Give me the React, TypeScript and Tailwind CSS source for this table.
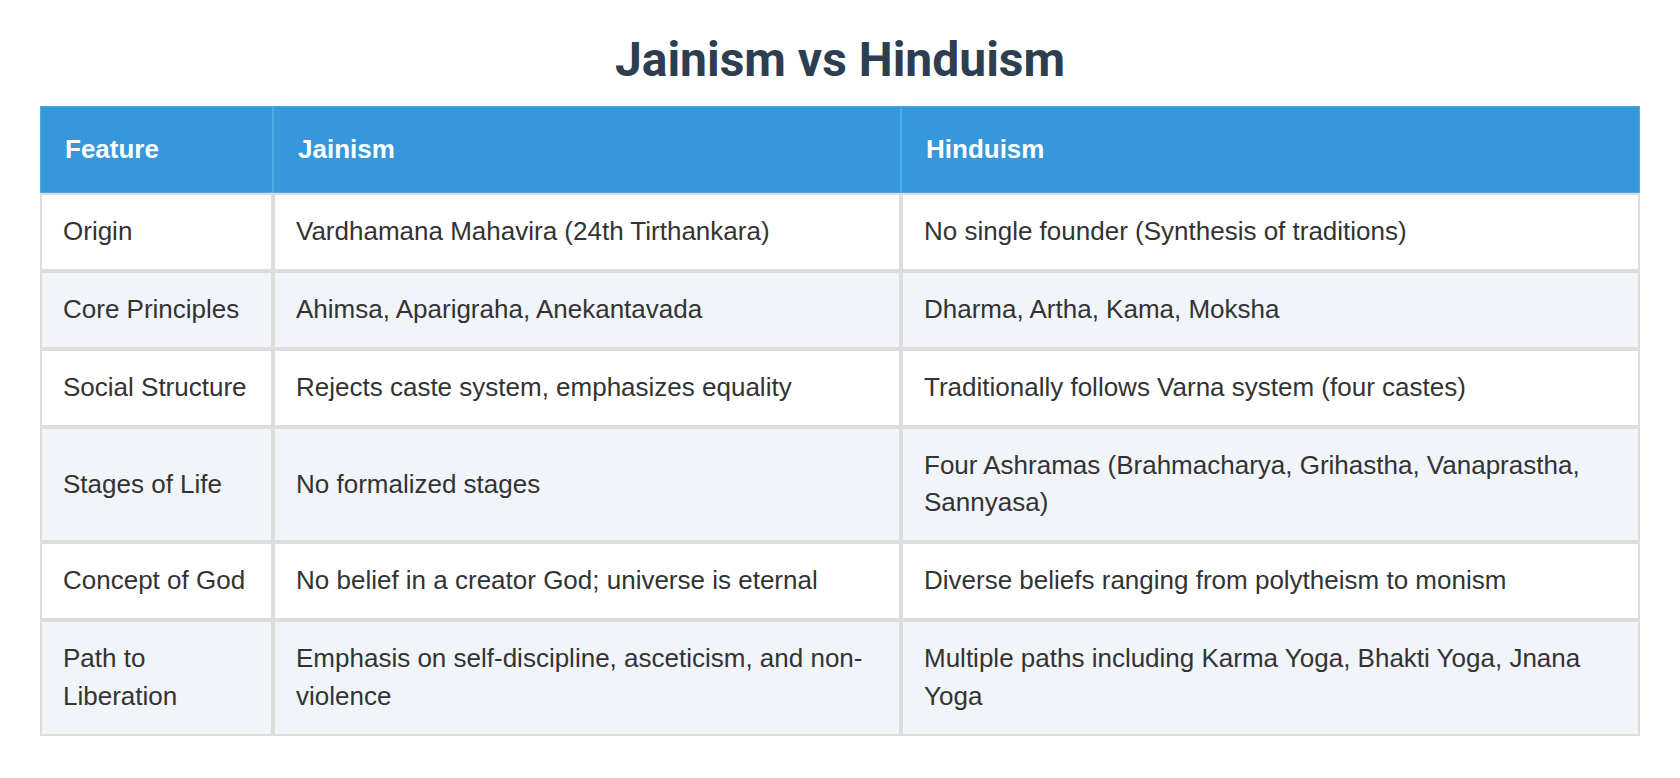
const rows = [
  {
    feature: "Origin",
    jainism: "Vardhamana Mahavira (24th Tirthankara)",
    hinduism: "No single founder (Synthesis of traditions)",
  },
  {
    feature: "Core Principles",
    jainism: "Ahimsa, Aparigraha, Anekantavada",
    hinduism: "Dharma, Artha, Kama, Moksha",
  },
  {
    feature: "Social Structure",
    jainism: "Rejects caste system, emphasizes equality",
    hinduism: "Traditionally follows Varna system (four castes)",
  },
  {
    feature: "Stages of Life",
    jainism: "No formalized stages",
    hinduism: "Four Ashramas (Brahmacharya, Grihastha, Vanaprastha, Sannyasa)",
  },
  {
    feature: "Concept of God",
    jainism: "No belief in a creator God; universe is eternal",
    hinduism: "Diverse beliefs ranging from polytheism to monism",
  },
  {
    feature: "Path to Liberation",
    jainism: "Emphasis on self-discipline, asceticism, and non-violence",
    hinduism: "Multiple paths including Karma Yoga, Bhakti Yoga, Jnana Yoga",
  },
];

export default function App() {
  const td = "border-2 border-[#dddddd] px-[21px] py-[18.25px] text-left align-middle";
  const th = "border border-[#4fa7e0] px-[24px] py-[23.5px] text-left align-middle font-bold";

  return (
    <div className="min-h-screen bg-white px-[40px] pt-[32px] pb-10 font-['Liberation_Sans',Arial,sans-serif] text-[#333333]">
      <h1 className="mb-[18px] text-center font-['Roboto',sans-serif] text-[48px] font-bold leading-[56px] text-[#2c3e50]">
        Jainism vs Hinduism
      </h1>

      <table className="w-full table-fixed border-separate border-spacing-0 text-[26px] leading-[37.5px]">
        <colgroup>
          <col className="w-[233px]" />
          <col className="w-[628px]" />
          <col />
        </colgroup>
        <thead>
          <tr className="bg-[#3498db] text-white">
            <th className={th}>Feature</th>
            <th className={th}>Jainism</th>
            <th className={th}>Hinduism</th>
          </tr>
        </thead>
        <tbody>
          {rows.map((row, i) => (
            <tr key={row.feature} className={i % 2 === 1 ? "bg-[#f1f4f9]" : "bg-white"}>
              <td className={td}>{row.feature}</td>
              <td className={td}>{row.jainism}</td>
              <td className={td}>{row.hinduism}</td>
            </tr>
          ))}
        </tbody>
      </table>
    </div>
  );
}
